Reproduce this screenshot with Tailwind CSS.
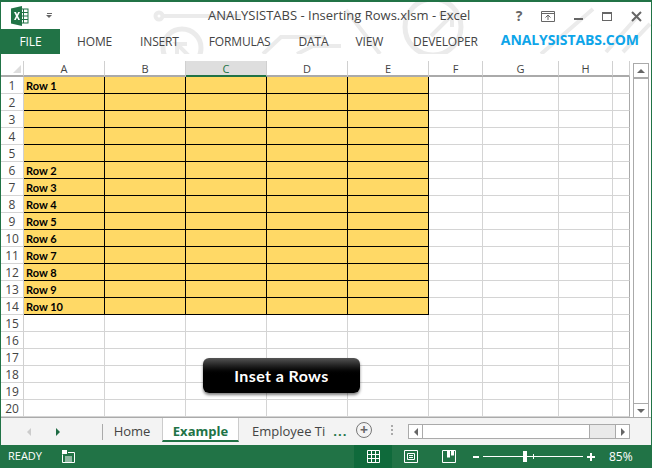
<!DOCTYPE html>
<html lang="en">
<head>
    <meta charset="UTF-8">
    <title>ANALYSISTABS - Inserting Rows.xlsm - Excel</title>
    <script src="https://cdn.jsdelivr.net/npm/@tailwindcss/browser@4"></script>
</head>
<body class="overflow-hidden">
    <div class="relative w-[652px] h-[468px] flex flex-col bg-white border-x border-[#217346] border-t-2 font-['Open_Sans',sans-serif] text-[#444]">

        <!-- circuit decoration behind title and tabs -->
        <svg class="absolute left-0 top-0" width="650" height="52" fill="none" stroke="#ebebeb" stroke-width="4">
            <circle cx="158" cy="14" r="3.500"/>
            <path d="M162 14H240"/>
            <circle cx="181" cy="46" r="19" stroke-width="5"/>
            <path d="M190 56l-14-14h10M176 42v10" stroke-width="4"/>
            <path d="M262 52l18-17h44M296 52l16-8h28"/>
            <circle cx="432" cy="25" r="28" stroke-width="5"/>
            <path d="M430 34l20-20M438 12h13v13" stroke-width="4"/>
            <path d="M345 8l34 44M540 52l52-45M605 50l32-36M622 50l27-28"/>
        </svg>

        <!-- title bar -->
        <div class="relative h-[27px] flex items-center">
            <svg class="ml-[10px]" width="18" height="20" viewBox="0 0 18 20">
                <rect x="8" y="3" width="9" height="14" fill="#fff" stroke="#217346"/>
                <path d="M8 6.500h9M8 10h9M8 13.500h9M12.500 3v14" stroke="#217346"/>
                <path d="M0 2.500 11 0v20L0 17.500z" fill="#217346"/>
                <path d="M3 6h2l1 2.500L7.200 6h1.800L7 10l2 4H7.200L6 11.400 4.800 14H3l2-4z" fill="#fff"/>
            </svg>
            <div class="ml-[17px] flex flex-col items-center gap-[1px]">
                <div class="w-[5px] h-[1px] bg-[#666]"></div>
                <div class="w-0 h-0 border-x-[3px] border-x-transparent border-t-[3px] border-t-[#666]"></div>
            </div>
            <div class="absolute left-[207px] top-[4px] text-[13px] leading-[18px] whitespace-nowrap">ANALYSISTABS - Inserting Rows.xlsm - Excel</div>
            <div class="absolute left-[513px] top-[7px] flex items-center">
                <span class="w-[10px] text-center font-bold text-[14px] leading-none text-[#666]">?</span>
                <svg class="ml-[17px]" width="14" height="11" viewBox="0 0 14 11" fill="none" stroke="#666">
                    <path d="M.500.500h13v10H.500zM.500 2.500h13"/>
                    <path d="M7 9V4.500M4.500 6.500 7 4l2.500 2.500" />
                </svg>
                <div class="ml-[19px] mt-[5px] w-[9px] h-[2px] bg-[#666]"></div>
                <div class="ml-[19px] w-[10px] h-[9px] border border-t-2 border-[#666]"></div>
                <svg class="ml-[19px]" width="11" height="11" viewBox="0 0 11 11" stroke="#666" stroke-width="2"><path d="M1 1l9 9M10 1l-9 9"/></svg>
            </div>
        </div>

        <!-- ribbon tabs -->
        <div class="relative h-[25px] flex items-center text-[12px] tracking-[-0.15px]">
            <div class="w-[59px] h-full bg-[#217346] text-white flex items-center justify-center">FILE</div>
            <span class="ml-[17px]">HOME</span>
            <span class="ml-[28px]">INSERT</span>
            <span class="ml-[30px]">FORMULAS</span>
            <span class="ml-[28px]">DATA</span>
            <span class="ml-[27px]">VIEW</span>
            <span class="ml-[30px]">DEVELOPER</span>
            <span class="ml-[23px] font-bold text-[14px] text-[#0ea5e9] tracking-[-0.1px] -mt-[4px]">ANALYSISTABS.COM</span>
        </div>

        <!-- sheet -->
        <div class="h-[7px]"></div>
        <div class="relative flex flex-1 min-h-0">
            <div id="sheet" class="w-[629px] text-[#444] grid grid-cols-[23px_81px_81px_81px_81px_81px_54px_76px_54px_17px] grid-rows-[16px_repeat(20,17px)] content-start"></div>

            <!-- vertical scrollbar -->
            <div class="ml-[3px] mt-[2px] w-[16px] h-[355px] flex flex-col justify-between border-x border-[#aaa] bg-white">
                <div class="h-[16px] border-b-2 border-[#aaa] border-t flex items-center justify-center"><div class="w-0 h-0 border-x-[4px] border-x-transparent border-b-[4px] border-b-[#666]"></div></div>
                <div class="h-[15px] border-y border-[#aaa] flex items-center justify-center"><div class="w-0 h-0 border-x-[4px] border-x-transparent border-t-[4px] border-t-[#666]"></div></div>
            </div>

            <!-- macro button -->
            <div class="absolute left-[202px] top-[297px] w-[157px] h-[35px] rounded-[6px] bg-linear-to-b from-[#555] via-[#000] to-[#000] shadow-[0_2px_3px_rgba(0,0,0,0.5)] text-white font-bold text-[16px] tracking-[0.4px] flex items-center justify-center font-['Lato',sans-serif]">Inset a Rows</div>
        </div>

        <!-- sheet tabs -->
        <div class="absolute left-0 top-[415px] w-[650px] h-[28px] bg-[#f3f3f3] border-t border-[#aaa] flex items-start text-[13px]">
            <div class="ml-[26px] mt-[10px] w-0 h-0 border-y-[4px] border-y-transparent border-r-[4px] border-r-[#ccc]"></div>
            <div class="ml-[25px] mt-[10px] w-0 h-0 border-y-[4px] border-y-transparent border-l-[4px] border-l-[#1e6b43]"></div>
            <div class="ml-[42px] mt-[6px] w-[1px] h-[16px] bg-[#aaa]"></div>
            <div class="w-[60px] text-center mt-[4px] -ml-[1px]">Home</div>
            <div class="w-[77px] h-[24px] bg-white border-x border-[#ccc] border-b-2 border-b-[#217346] text-center font-bold text-[#217346] pt-[4px]">Example</div>
            <div class="ml-[13px] mt-[4px] whitespace-nowrap">Employee Ti</div>
            <div class="ml-[8px] mt-[4px] w-[14px] font-bold text-[#217346] tracking-[1px]">...</div>
            <div class="absolute left-[355px] top-[4px] w-[16px] h-[16px] rounded-full border border-[#777] flex items-center justify-center text-[#666] font-bold text-[14px] leading-none">+</div>
            <div class="absolute left-[390px] top-[7px] flex flex-col gap-[2px]">
                <div class="w-[2px] h-[2px] bg-[#aaa]"></div>
                <div class="w-[2px] h-[2px] bg-[#aaa]"></div>
                <div class="w-[2px] h-[2px] bg-[#aaa]"></div>
            </div>
            <!-- horizontal scrollbar -->
            <div class="absolute left-[407px] top-[6px] w-[222px] h-[15px] border border-[#aaa] bg-[#eaeaea] flex">
                <div class="w-[14px] border-r border-[#aaa] bg-white flex items-center justify-center"><div class="w-0 h-0 border-y-[4px] border-y-transparent border-r-[4px] border-r-[#666]"></div></div>
                <div class="w-[167px] bg-white border-r border-[#aaa]"></div>
                <div class="ml-auto w-[14px] border-l border-[#aaa] bg-white flex items-center justify-center"><div class="w-0 h-0 border-y-[4px] border-y-transparent border-l-[4px] border-l-[#666]"></div></div>
            </div>
        </div>

        <!-- status bar -->
        <div class="absolute -left-[1px] top-[443px] w-[652px] h-[23px] bg-[#217346] text-white flex items-center text-[11px]">
            <span class="ml-[8px]">READY</span>
            <svg class="ml-[20px]" width="13" height="13" viewBox="0 0 13 13" fill="none" stroke="#fff">
                <rect x="0" y="0" width="5" height="4" fill="#fff" stroke="none"/>
                <path d="M.500 4.500v8h12v-10H6M3 7h7M3 9h7M3 11h7" />
            </svg>
            <div class="ml-[279px] w-[38px] h-full bg-[#0f6a3b] flex items-center justify-center">
                <svg width="13" height="13" viewBox="0 0 13 13" fill="none" stroke="#fff"><path d="M.500.500h12v12H.500zM4.500.500v12M8.500.500v12M.500 4.500h12M.500 8.500h12"/></svg>
            </div>
            <svg class="ml-[12px]" width="14" height="13" viewBox="0 0 14 13" fill="none" stroke="#fff"><path d="M.500.500h13v12H.500zM3.500 3.500h7v6h-7zM5 5.500h4M5 7.500h4"/></svg>
            <svg class="ml-[24px]" width="14" height="13" viewBox="0 0 14 13" fill="none" stroke="#fff"><path d="M.500.500h13v12H.500z"/><path d="M5 .500h3v7H5zM9 .500h3v5H9z" fill="#fff" stroke="none"/></svg>
            <div class="ml-[17px] w-[6px] h-[2px] bg-white"></div>
            <div class="relative ml-[4px] w-[100px] h-[1px] bg-white">
                <div class="absolute left-[40px] -top-[5px] w-[4px] h-[11px] bg-white"></div>
                <div class="absolute left-[50px] -top-[2px] w-[1px] h-[5px] bg-white"></div>
            </div>
            <div class="relative ml-[4px] w-[8px] h-[2px] bg-white">
                <div class="absolute left-[3px] -top-[3px] w-[2px] h-[8px] bg-white"></div>
            </div>
            <span class="ml-[14px] text-[12px]">85%</span>
        </div>
    </div>

    <script>
        //column letters and which row holds which label
        const cols = ['A', 'B', 'C', 'D', 'E', 'F', 'G', 'H', ''];
        const labels = {1: 'Row 1', 6: 'Row 2', 7: 'Row 3', 8: 'Row 4', 9: 'Row 5', 10: 'Row 6', 11: 'Row 7', 12: 'Row 8', 13: 'Row 9', 14: 'Row 10'};
        const headCell = 'flex items-center justify-center text-[11px] pt-[2px] border-r border-[#d0d0d0] font-[\'Open_Sans\',sans-serif]';
        const filled = 'bg-[#ffd966] border-r border-b border-black text-black font-bold text-[11px] leading-[16px] pl-[2px] pt-[1px] font-[\'Lato\',sans-serif] whitespace-nowrap';
        const empty = 'border-r border-b border-[#d4d4d4]';

        let html = `<div class="${headCell} border-b-2 border-b-[#aaa] relative"><div class="absolute right-[2px] bottom-[2px] w-0 h-0 border-l-[8px] border-l-transparent border-b-[8px] border-b-[#ddd]"></div></div>`;
        cols.forEach(c => {
            const current = c === 'C' ? 'bg-[#dedede] text-[#217346] border-b-2 border-b-[#217346]' : 'border-b-2 border-b-[#aaa]';
            html += `<div class="${headCell} ${current}">${c}</div>`;
        });
        for (let r = 1; r <= 20; r++) {
            html += `<div class="${headCell} border-b border-b-[#d4d4d4] text-[12px]">${r}</div>`;
            cols.forEach((c, i) => {
                const inTable = r <= 14 && i < 5;
                const lastCol = i === 8 ? 'border-r-[#aaa]' : '';
                html += `<div class="${inTable ? filled : empty} ${lastCol}">${inTable && i === 0 && labels[r] ? labels[r] : ''}</div>`;
            });
        }
        document.getElementById('sheet').innerHTML = html;
    </script>
</body>
</html>
